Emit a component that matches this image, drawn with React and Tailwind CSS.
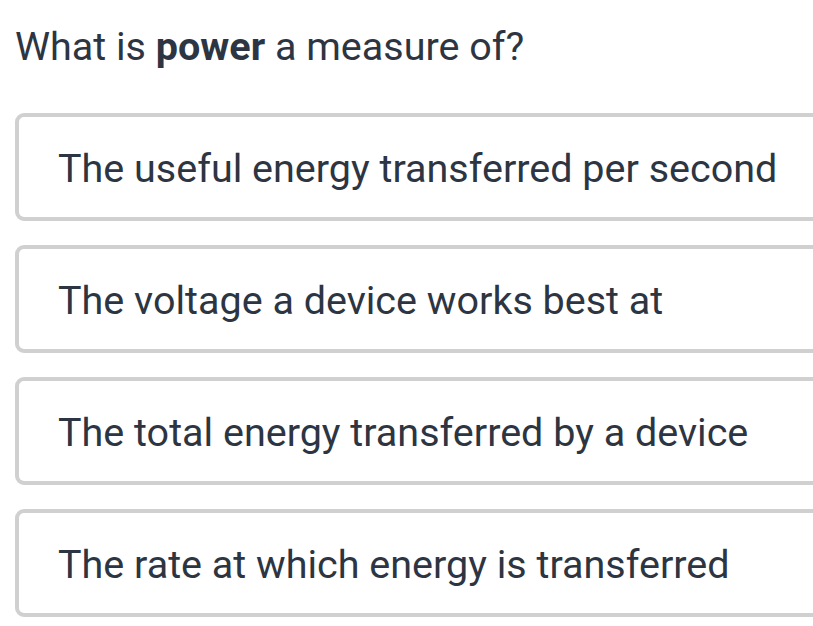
const options = [
  'The useful energy transferred per second',
  'The voltage a device works best at',
  'The total energy transferred by a device',
  'The rate at which energy is transferred',
]

export default function App() {
  return (
    <div className="w-[813px] h-[626px] overflow-hidden bg-white font-['Roboto',sans-serif] text-[#2d3542]">
      <h1 className="pl-[15px] pt-[23px] text-[39.5px] leading-[47px] font-normal">
        What is <strong className="font-bold">power</strong> a measure of?
      </h1>
      <div className="mt-[43px] ml-[15px] flex flex-col gap-[24px]">
        {options.map((text) => (
          <button
            key={text}
            className="w-[830px] h-[108px] flex items-center pl-[39px] pt-[4px] border-[4px] border-[#d0d0d0] rounded-[9px] bg-white text-left text-[39.5px]"
          >
            {text}
          </button>
        ))}
      </div>
    </div>
  )
}
